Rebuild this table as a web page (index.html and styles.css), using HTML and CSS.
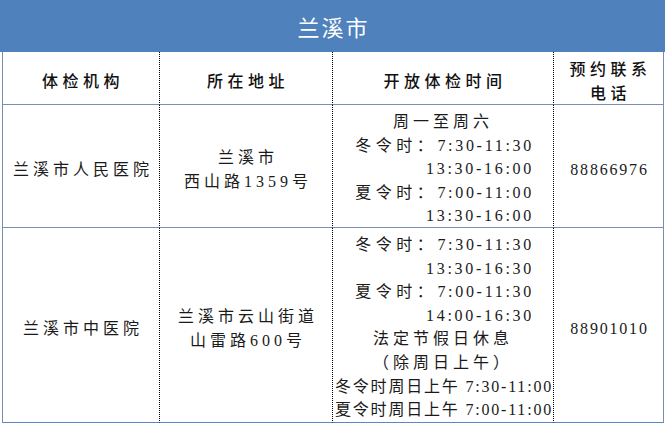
FILE: index.html
```html
<!DOCTYPE html>
<html lang="zh-CN">
<head>
<meta charset="utf-8">
<title>兰溪市</title>
<link rel="stylesheet" href="styles.css">
</head>
<body>
<div class="page">
  <div class="title">兰溪市</div>
  <div class="grid">
    <div class="cell head">体检机构</div>
    <div class="cell head">所在地址</div>
    <div class="cell head wide">开放体检时间</div>
    <div class="cell head last">预约联系<br>电话</div>

    <div class="cell body">兰溪市人民医院</div>
    <div class="cell body">兰溪市<br>西山路1359号</div>
    <div class="cell body times">
      <div class="line">周一至周六</div>
      <div class="grp">
        <div class="line t"><span class="lbl">冬令时：</span>7:30-11:30</div>
        <div class="line t">13:30-16:00</div>
        <div class="line t"><span class="lbl">夏令时：</span>7:00-11:00</div>
        <div class="line t">13:30-16:00</div>
      </div>
    </div>
    <div class="cell body last phone">88866976</div>

    <div class="cell body">兰溪市中医院</div>
    <div class="cell body">兰溪市云山街道<br>山雷路600号</div>
    <div class="cell body times">
      <div class="grp">
        <div class="line t"><span class="lbl">冬令时：</span>7:30-11:30</div>
        <div class="line t">13:30-16:30</div>
        <div class="line t"><span class="lbl">夏令时：</span>7:00-11:30</div>
        <div class="line t">14:00-16:30</div>
      </div>
      <div class="line">法定节假日休息</div>
      <div class="line">（除周日上午）</div>
      <div class="line tight">冬令时周日上午 7:30-11:00</div>
      <div class="line tight">夏令时周日上午 7:00-11:00</div>
    </div>
    <div class="cell body last phone">88901010</div>
  </div>
</div>
</body>
</html>
```
FILE: styles.css
```css
html, body {
  margin: 0;
  padding: 0;
  background: #ffffff;
}

.page {
  width: 668px;
}

.title {
  width: 665px;
  height: 52px;
  background: #4f81bd;
  color: #ffffff;
  font-family: "Noto Sans CJK SC", sans-serif;
  font-size: 22px;
  letter-spacing: 2px;
  display: flex;
  align-items: center;
  justify-content: center;
  box-sizing: border-box;
  padding-left: 2px;
}

.grid {
  margin-left: 2px;
  width: 662px;
  box-sizing: border-box;
  border-left: 1px solid #7a8db0;
  border-right: 1px solid #7a8db0;
  display: grid;
  grid-template-columns: 157px 173px 221px 109px;
  grid-template-rows: 53px 123px 195px;
}

.cell {
  border-bottom: 1px solid #7a8fb5;
  border-right: 1px dotted #000;
  box-sizing: border-box;
  display: flex;
  flex-direction: column;
  justify-content: center;
  align-items: center;
  text-align: center;
  color: #1a1a1a;
}

.cell.last {
  border-right: none;
}

.grid > .cell:nth-last-child(-n+4) {
  border-bottom-color: #5b87c5;
}

.head {
  font-family: "Noto Sans CJK SC", sans-serif;
  font-weight: 500;
  font-size: 16px;
  letter-spacing: 4.5px;
  line-height: 24.5px;
  padding-top: 4px;
  padding-left: 4px;
  color: #111;
}

.body {
  font-family: "Liberation Serif", "Noto Sans CJK SC", serif;
  font-size: 16px;
  letter-spacing: 4px;
  line-height: 24px;
  padding-top: 8px;
  padding-left: 4px;
}

.phone {
  letter-spacing: 1.8px;
  padding-left: 2px;
}

.times {
  padding-top: 5px;
  padding-left: 0;
  line-height: 23.6px;
  justify-content: flex-start;
}

.line {
  white-space: nowrap;
}

.grp {
  width: 182px;
  text-align: right;
}

.t {
  letter-spacing: 2.7px;
}

.lbl {
  letter-spacing: 4.5px;
}

.tight {
  letter-spacing: 1.8px;
  padding-left: 2px;
}
```
